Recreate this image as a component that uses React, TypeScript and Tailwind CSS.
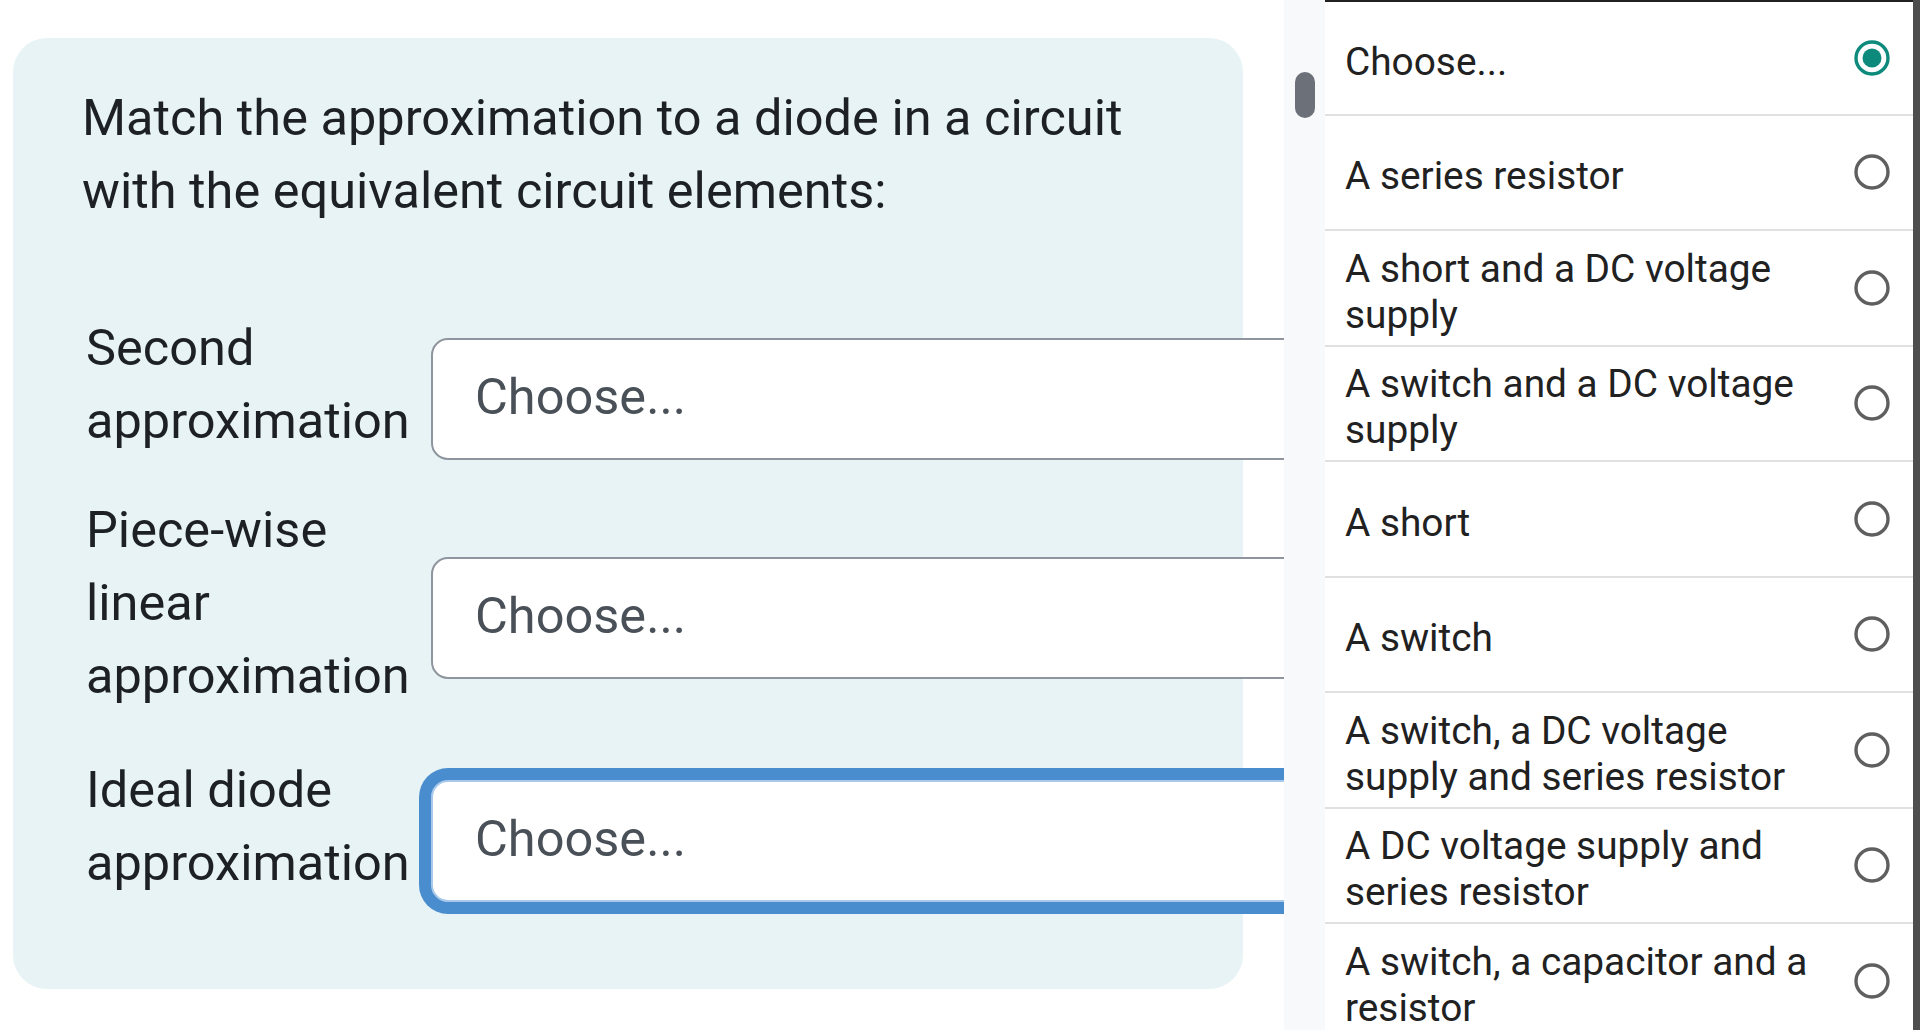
import React from "react";

const options: { lines: string[]; selected?: boolean }[] = [
  { lines: ["Choose..."], selected: true },
  { lines: ["A series resistor"] },
  { lines: ["A short and a DC voltage", "supply"] },
  { lines: ["A switch and a DC voltage", "supply"] },
  { lines: ["A short"] },
  { lines: ["A switch"] },
  { lines: ["A switch, a DC voltage", "supply and series resistor"] },
  { lines: ["A DC voltage supply and", "series resistor"] },
  { lines: ["A switch, a capacitor and a", "resistor"] },
];

function Radio({ selected }: { selected?: boolean }) {
  const c = selected ? "#0d8a7b" : "#5f5f5f";
  return (
    <svg width="36" height="36" viewBox="0 0 36 36" className="shrink-0">
      <circle cx="18" cy="18" r="16" fill="none" stroke={c} strokeWidth="3.4" />
      {selected && <circle cx="18" cy="18" r="9.5" fill={c} />}
    </svg>
  );
}

function SelectBox({ focused }: { focused?: boolean }) {
  return (
    <div
      className={
        focused
          ? "mt-[30px] h-[122px] w-[900px] shrink-0 rounded-[17px] border-2 border-[#a9c9ea] bg-white pl-[42px] flex items-center text-[50.5px] text-[#495057] shadow-[0_0_0_12px_#4a8dce]"
          : "mt-[30px] h-[122px] w-[900px] shrink-0 rounded-[17px] border-2 border-[#8f959e] bg-white pl-[42px] flex items-center text-[50.5px] text-[#495057]"
      }
    >
      <span className="-translate-y-[2px]">Choose...</span>
    </div>
  );
}

function Row({ label, focused, mt }: { label: string[]; focused?: boolean; mt: string }) {
  return (
    <div className={`flex items-center ${mt}`}>
      <div className="w-[349px] shrink-0 pl-[4px] text-[50.5px] leading-[73px] text-[#1d2125] whitespace-nowrap">
        {label.map((l, i) => (
          <div key={i}>{l}</div>
        ))}
      </div>
      <SelectBox focused={focused} />
    </div>
  );
}

export default function App() {
  return (
    <div
      className="w-[1920px] h-[1030px] bg-white flex overflow-hidden"
      style={{ fontFamily: 'Roboto, "Noto Sans", sans-serif' }}
    >
      <div className="w-[1284px] h-full shrink-0 overflow-hidden">
        <div className="ml-[13px] mt-[38px] w-[1230px] rounded-[34px] bg-[#e7f3f5] pt-[43px] pb-[87px] pl-[69px]">
          <div className="text-[50.5px] leading-[73px] text-[#1d2125] whitespace-nowrap">
            <div>Match the approximation to a diode in a circuit</div>
            <div>with the equivalent circuit elements:</div>
          </div>
          <Row label={["Second", "approximation"]} mt="mt-[81px]" />
          <Row label={["Piece-wise", "linear", "approximation"]} mt="mt-[33px]" />
          <Row label={["Ideal diode", "approximation"]} focused mt="mt-[38px]" />
        </div>
      </div>
      <div className="w-[41px] h-full shrink-0 bg-[#f8f9fa] pt-[72px] flex justify-center">
        <div className="w-[20px] h-[46px] rounded-full bg-[#6c7179]" />
      </div>
      <div className="w-[588px] h-full shrink-0 bg-white flex flex-col rounded-tr-[6px]">
        {options.map((o, i) => (
          <div
            key={i}
            className={
              i === 0
                ? "h-[115.5px] shrink-0 border-t-2 border-t-[#222222] border-b-2 border-b-[#e0e0e0] flex items-center pl-[20px] pr-[23px]"
                : "h-[115.5px] shrink-0 border-b-2 border-b-[#e0e0e0] flex items-center pl-[20px] pr-[23px]"
            }
          >
            <div className="flex-1 pt-[8px] text-[38.8px] leading-[46px] text-[#212121] whitespace-nowrap">
              {o.lines.map((l, j) => (
                <div key={j}>{l}</div>
              ))}
            </div>
            <Radio selected={o.selected} />
          </div>
        ))}
      </div>
      <div className="w-[7px] h-full shrink-0 bg-[#4e4e4e]" />
    </div>
  );
}
